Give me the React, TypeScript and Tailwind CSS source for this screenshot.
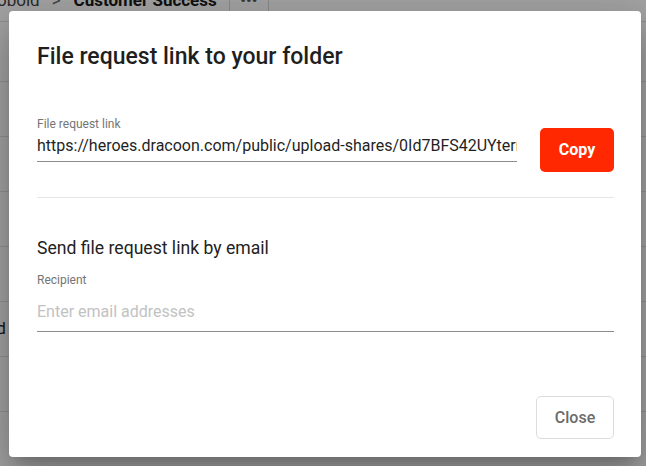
import { useState } from "react";

const rows = ["", "", "", "", "Shared", "", "", ""];

function Background() {
  return (
    <div className="w-full h-full bg-white text-[#1a1a1a]">
      {/* breadcrumb bar, only its lower edge is visible */}
      <div className="h-[22px] border-b border-[#e2e2e2] overflow-hidden flex items-start">
        <div className="flex items-stretch -mt-[10px] text-[17px] leading-[20px]">
          <span className="text-[#444] -ml-[3px]">obold</span>
          <span className="ml-[12px] text-[#666]">&gt;</span>
          <span className="ml-[13px] font-bold">Customer Success</span>
          <span className="ml-[12px] w-[40px] h-[30px] border-x border-[#d8d8d8] text-[#555] text-center leading-[20px]">•••</span>
        </div>
      </div>
      <div className="h-[60px] border-b border-[#e2e2e2]" />
      {rows.map((r, i) => (
        <div key={i} className="h-[55px] border-b border-[#e2e2e2] flex items-center">
          <span className="-ml-[44px] text-[16px]">{r}</span>
        </div>
      ))}
    </div>
  );
}

export default function App() {
  const [email, setEmail] = useState("");
  const link = "https://heroes.dracoon.com/public/upload-shares/0Id7BFS42UYtern8Jk2Q";

  return (
    <div className="relative w-[646px] h-[466px] overflow-hidden font-['Roboto',_'Liberation_Sans',_sans-serif]">
      <Background />
      <div className="absolute inset-0 bg-black/[0.36]" />

      {/* dialog */}
      <div className="absolute left-[9px] top-[11px] w-[632px] h-[446px] bg-white rounded-[4px] shadow-[0_11px_15px_-7px_rgba(0,0,0,0.2),0_24px_38px_3px_rgba(0,0,0,0.14),0_9px_46px_8px_rgba(0,0,0,0.12)] flex flex-col pt-[32px] pl-[28px] pr-[27px] pb-[18px]">
        <h2 className="text-[23px] leading-[28px] font-medium text-[#1f1f1f]">File request link to your folder</h2>

        <div className="mt-[45px] flex items-start gap-[23px]">
          <div className="w-[480px]">
            <div className="text-[12px] leading-[16px] text-[#757575]">File request link</div>
            <div className="mt-[2px] pb-[3px] border-b border-[#8c8c8c]">
              <input
                readOnly
                value={link}
                className="block w-full text-[16px] leading-[24px] h-[24px] outline-none text-[#1f1f1f] bg-transparent"
              />
            </div>
          </div>
          <button className="mt-[12px] w-[74px] h-[44px] rounded-[5px] bg-[#ff2800] text-white text-[16px] font-bold">
            Copy
          </button>
        </div>

        <div className="mt-[25px] h-px bg-[#e6e6e6]" />

        <h3 className="mt-[38px] text-[17.6px] leading-[24px] text-[#222]">Send file request link by email</h3>
        <div className="mt-[12px] text-[12px] leading-[16px] text-[#757575]">Recipient</div>
        <div className="mt-[12px] pb-[7px] border-b border-[#8c8c8c]">
          <input
            value={email}
            onChange={(e) => setEmail(e.target.value)}
            placeholder="Enter email addresses"
            className="block w-full text-[16px] leading-[24px] h-[24px] outline-none text-[#1f1f1f] placeholder:text-[#c2c2c2] bg-transparent"
          />
        </div>

        <div className="mt-auto flex justify-end">
          <button className="w-[78px] h-[43px] rounded-[5px] border border-[#dcdcdc] bg-white text-[#6b6b6b] text-[16px] font-medium">
            Close
          </button>
        </div>
      </div>
    </div>
  );
}
